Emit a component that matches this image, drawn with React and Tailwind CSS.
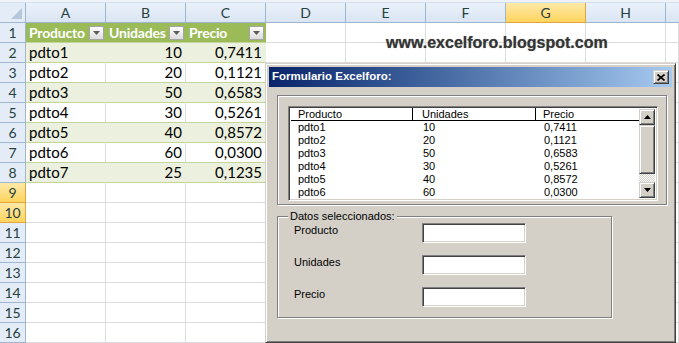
import React from "react";

const COLS = ["A", "B", "C", "D", "E", "F", "G", "H"];

const data = [
  ["pdto1", "10", "0,7411"],
  ["pdto2", "20", "0,1121"],
  ["pdto3", "50", "0,6583"],
  ["pdto4", "30", "0,5261"],
  ["pdto5", "40", "0,8572"],
  ["pdto6", "60", "0,0300"],
  ["pdto7", "25", "0,1235"],
];

function FilterButton() {
  return (
    <span className="flex items-center justify-center w-[15px] h-[14px] shrink-0 border border-[#a5a5a5] bg-gradient-to-b from-[#ffffff] to-[#dcdcdc]">
      <svg width="7" height="4" viewBox="0 0 7 4">
        <path d="M0 0h7L3.5 4z" fill="#5a5a5a" />
      </svg>
    </span>
  );
}

function ColHeader({ label }) {
  const sel = label === "G";
  return (
    <div
      className={`w-[80px] shrink-0 flex items-center justify-center border-r border-b text-[14px] ${
        sel
          ? "bg-gradient-to-b from-[#fde9a6] to-[#ffd45c] border-[#e2a73c] text-[#27413e]"
          : "bg-gradient-to-b from-[#eaf1fa] to-[#dae5f3] border-[#9eb6ce] text-[#27413e]"
      }`}
    >
      {label}
    </div>
  );
}

function RowHeader({ n }) {
  const sel = n === 9 || n === 10;
  return (
    <div
      className={`w-[26px] shrink-0 flex items-center justify-center border-r border-b text-[14px] ${
        sel
          ? "bg-gradient-to-b from-[#fde9a6] to-[#ffd45c] border-[#e2a73c] text-[#27413e]"
          : "bg-[#e4ecf7] border-[#9eb6ce] text-[#27413e]"
      }`}
    >
      {n}
    </div>
  );
}

function EmptyCell({ w = "w-[80px]" }) {
  return <div className={`${w} shrink-0 border-r border-b border-[#dadcdd]`} />;
}

function SheetRow({ n }) {
  let tableCells;
  if (n === 1) {
    tableCells = ["Producto", "Unidades", "Precio"].map((t) => (
      <div
        key={t}
        className="w-[80px] shrink-0 flex items-center justify-between pl-[3px] pr-[2px] bg-[#9bbb59] border-b border-[#c2d69b] text-white font-bold text-[14px] tracking-[-0.2px]"
      >
        <span>{t}</span>
        <FilterButton />
      </div>
    ));
  } else if (n <= 8) {
    const row = data[n - 2];
    const band = n % 2 === 0;
    tableCells = row.map((t, i) => (
      <div
        key={i}
        className={`w-[80px] shrink-0 flex items-center px-[3px] border-b border-[#c2d69b] text-[15px] text-black ${
          i === 0 ? "justify-start" : "justify-end"
        } ${band ? "bg-[#ebf1de] border-r border-r-[#ebf1de]" : "bg-white border-r border-r-[#dadcdd]"}`}
      >
        {t}
      </div>
    ));
  } else {
    tableCells = [0, 1, 2].map((i) => <EmptyCell key={i} />);
  }
  return (
    <div className="flex h-[20px]">
      <RowHeader n={n} />
      {tableCells}
      {COLS.slice(3).map((c) => (
        <EmptyCell key={c} />
      ))}
      <EmptyCell w="w-[13px]" />
    </div>
  );
}

function Raised({ className = "", children }) {
  return (
    <div
      className={`bg-[#d4d0c8] border border-t-[#d4d0c8] border-l-[#d4d0c8] border-r-[#404040] border-b-[#404040] shadow-[inset_1px_1px_0_#fff,inset_-1px_-1px_0_#808080] ${className}`}
    >
      {children}
    </div>
  );
}

function Sunken({ className = "", children }) {
  return (
    <div
      className={`bg-white border border-t-[#808080] border-l-[#808080] border-r-white border-b-white shadow-[inset_1px_1px_0_#404040,inset_-1px_-1px_0_#d4d0c8] ${className}`}
    >
      {children}
    </div>
  );
}

function ScrollBar() {
  return (
    <div className="w-[16px] shrink-0 flex flex-col my-[1px] mr-[1px]">
      <Raised className="h-[16px] flex items-center justify-center">
        <svg width="7" height="4" viewBox="0 0 7 4">
          <path d="M3.5 0L7 4H0z" fill="#000" />
        </svg>
      </Raised>
      <Raised className="h-[49px]" />
      <div className="flex-1 bg-[repeating-conic-gradient(#ffffff_0_25%,#d4d0c8_0_50%)] bg-[length:2px_2px]" />
      <Raised className="h-[16px] flex items-center justify-center">
        <svg width="7" height="4" viewBox="0 0 7 4">
          <path d="M0 0h7L3.5 4z" fill="#000" />
        </svg>
      </Raised>
    </div>
  );
}

function ListBox() {
  return (
    <Sunken className="w-[370px] h-[95px] flex p-[1px]">
      <div className="flex-1 flex flex-col pl-[1px]">
        <div className="flex h-[13px] border-b border-black">
          <div className="w-[122px] pl-[7px] border-r border-black leading-[12px]">Producto</div>
          <div className="w-[123px] pl-[9px] border-r border-black leading-[12px]">Unidades</div>
          <div className="flex-1 pl-[7px] leading-[12px]">Precio</div>
        </div>
        {data.slice(0, 6).map((r) => (
          <div key={r[0]} className="flex h-[13px] items-center leading-[13px]">
            <div className="w-[122px] pl-[7px]">{r[0]}</div>
            <div className="w-[123px] pl-[10px]">{r[1]}</div>
            <div className="flex-1 pl-[8px]">{r[2]}</div>
          </div>
        ))}
      </div>
      <ScrollBar />
    </Sunken>
  );
}

function Field({ label }) {
  return (
    <div className="flex items-start h-[20px]">
      <span className="w-[144px] pl-[16px] -mt-[1px]">{label}</span>
      <Sunken className="w-[104px] h-[20px]" />
    </div>
  );
}

function Dialog() {
  return (
    <div className="absolute left-[265px] top-[63px] w-[411px] h-[280px] bg-[#d4d0c8] border border-t-[#d4d0c8] border-l-[#d4d0c8] border-r-[#404040] border-b-[#404040] shadow-[inset_1px_1px_0_#fff,inset_-1px_-1px_0_#808080] p-[3px] text-[11px] text-black font-['Liberation_Sans',Arial,sans-serif]">
      <div className="h-[20px] flex items-center justify-between pl-[3px] pr-[3px] bg-gradient-to-r from-[#0a246a] to-[#a6caf0]">
        <span className="text-white font-bold text-[11.5px]">Formulario Excelforo:</span>
        <Raised className="w-[16px] h-[14px] flex items-center justify-center">
          <svg width="8" height="7" viewBox="0 0 8 7">
            <path d="M0.5 0.5L7.5 6.5M7.5 0.5L0.5 6.5" stroke="#000" strokeWidth="1.6" />
          </svg>
        </Raised>
      </div>
      <div className="ml-[8px] mt-[8px] w-[390px] h-[110px] border border-[#808080] shadow-[inset_1px_1px_0_#fff,1px_1px_0_#fff] pl-[10px] pt-[10px]">
        <ListBox />
      </div>
      <fieldset className="ml-[8px] mt-[3px] w-[335px] h-[110px] border border-[#808080] shadow-[inset_1px_1px_0_#fff,1px_1px_0_#fff]">
        <legend className="ml-[10px] px-[2px] bg-[#d4d0c8]">Datos seleccionados:</legend>
        <div className="flex flex-col gap-[12px] -mt-[2px]">
          <Field label="Producto" />
          <Field label="Unidades" />
          <Field label="Precio" />
        </div>
      </fieldset>
    </div>
  );
}

export default function App() {
  return (
    <div className="relative w-[679px] h-[343px] overflow-hidden bg-white font-['Lato',sans-serif]">
      <div className="h-[3px] bg-[#eef3fa] border-b border-[#d5e0ee]" />
      <div className="flex h-[20px]">
        <div className="w-[26px] shrink-0 border-r border-b border-[#9eb6ce] bg-[#e4ecf7] flex items-end justify-end p-[3px]">
          <svg width="11" height="11" viewBox="0 0 11 11">
            <path d="M11 0V11H0z" fill="#b6c7dc" />
          </svg>
        </div>
        {COLS.map((c) => (
          <ColHeader key={c} label={c} />
        ))}
        <div className="w-[13px] shrink-0 border-b border-[#9eb6ce] bg-gradient-to-b from-[#eaf1fa] to-[#dae5f3]" />
      </div>
      {Array.from({ length: 16 }, (_, i) => (
        <SheetRow key={i} n={i + 1} />
      ))}
      <div className="absolute left-[386px] top-[31px] text-[16px] font-bold text-[#353535] font-['Liberation_Sans',Arial,sans-serif] [text-shadow:0_0_1px_#888]">
        www.excelforo.blogspot.com
      </div>
      <Dialog />
    </div>
  );
}
